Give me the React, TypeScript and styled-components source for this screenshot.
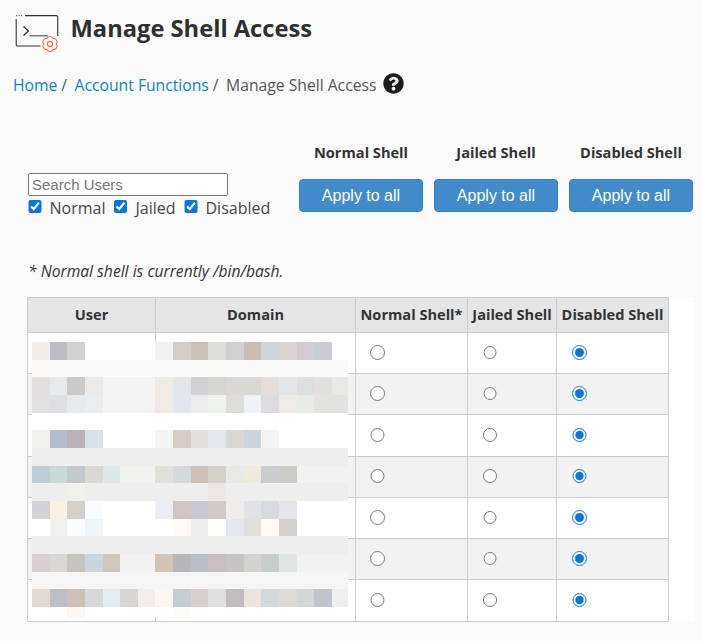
import React from "react";
import styled, { createGlobalStyle } from "styled-components";
import { FaQuestionCircle } from "react-icons/fa";

const Global = createGlobalStyle`
  html, body { margin: 0; padding: 0; background: #fafafa; }
  body { font-family: "Open Sans", "Liberation Sans", sans-serif; color: #333; }
`;

const Page = styled.div`
  width: 703px;
  height: 641px;
  overflow: hidden;
  box-sizing: border-box;
  background: #fafafa;
`;

const Header = styled.header`
  display: flex;
  align-items: center;
  height: 56px;
  padding: 0 0 0 14px;
`;

const LogoSvg = styled.svg`
  width: 46px;
  height: 40px;
  flex: none;
  margin-top: 7px;
`;

const Title = styled.h1`
  margin: 0 0 0 10.5px;
  font-size: 23.7px;
  font-weight: 700;
  line-height: 30px;
  color: #2f2f2f;
`;

const Crumbs = styled.nav`
  display: flex;
  align-items: center;
  height: 30px;
  margin-top: 14px;
  padding-left: 13px;
  font-size: 15.7px;
  color: #555;
`;

const CrumbLink = styled.a`
  color: #0d7fd0;
  text-decoration: none;
`;

const Slash = styled.span`
  margin: 0 7.5px 0 4px;
  color: #555;
`;

const HelpIcon = styled(FaQuestionCircle)`
  width: 21px;
  height: 21px;
  margin: -3px 0 0 6.5px;
  color: #1c1c1c;
`;

const Toolbar = styled.section`
  display: flex;
  align-items: flex-end;
  justify-content: space-between;
  height: 77px;
  margin-top: 35px;
  padding: 0 10px 0 28px;
`;

const Filters = styled.div`
  display: flex;
  flex-direction: column;
  margin-bottom: -8px;
`;

const Search = styled.input`
  box-sizing: border-box;
  width: 200px;
  height: 23px;
  padding: 0 3px;
  border: 1px solid #767676;
  border-radius: 2px;
  background: #fff;
  font-family: "Liberation Sans", Arial, sans-serif;
  font-size: 15px;
  &::placeholder { color: #757575; }
`;

const Checks = styled.div`
  display: flex;
  align-items: center;
  height: 24px;
`;

const CheckLabel = styled.label`
  display: flex;
  align-items: center;
  margin-right: 8.5px;
  font-size: 16px;
  color: #444;
  &:last-child { margin-right: 0; }
`;

const Check = styled.input`
  width: 13.5px;
  height: 13.5px;
  margin: -3px 8px 0 0;
  accent-color: #0b76d8;
`;

const Bulk = styled.div`
  display: flex;
  gap: 11px;
`;

const BulkCol = styled.div`
  display: flex;
  flex-direction: column;
  align-items: center;
  width: 124px;
`;

const BulkTitle = styled.div`
  height: 22px;
  margin-bottom: 16px;
  font-size: 14.6px;
  line-height: 22px;
  font-weight: 700;
  color: #333;
`;

const ApplyButton = styled.button`
  box-sizing: border-box;
  width: 124px;
  height: 33px;
  padding: 0;
  border: 1px solid #3a80bf;
  border-radius: 4px;
  background: #428bca;
  color: #fff;
  font-family: "Liberation Sans", Arial, sans-serif;
  font-size: 16px;
`;

const Note = styled.p`
  margin: 47px 0 0 28px;
  height: 24px;
  font-size: 15.65px;
  line-height: 24px;
  font-style: italic;
  color: #333;
`;

const TableWrap = styled.div`
  position: relative;
  width: 667px;
  height: 324px;
  margin: 14px 0 0 27px;
  background: #fff;
`;

const Table = styled.table`
  width: 641px;
  table-layout: fixed;
  border-collapse: collapse;
  background: #fff;
`;

const Th = styled.th<{ $w: number }>`
  box-sizing: border-box;
  width: ${(p) => p.$w}px;
  height: 34.75px;
  padding: 0 0 2px;
  border: 1px solid #ccc;
  background: #e5e5e5;
  font-size: 14.6px;
  font-weight: 700;
  text-align: center;
  color: #333;
`;

const Tr = styled.tr<{ $alt: boolean }>`
  height: 41.25px;
  background: ${(p) => (p.$alt ? "#f2f2f2" : "#fff")};
`;

const Td = styled.td<{ $pad?: number }>`
  padding: 0 0 1px ${(p) => p.$pad ?? 15}px;
  border: 1px solid #ccc;
  line-height: 0;
`;

const Radio = styled.input<{ $s: number }>`
  width: ${(p) => p.$s}px;
  height: ${(p) => p.$s}px;
  margin: 0;
  accent-color: #0b76d8;
`;

const Mosaic = styled.div`
  position: absolute;
  left: 5px;
  top: 45px;
  width: 316px;
  height: 275px;
  display: grid;
  grid-template-columns: repeat(17, 17.65px) 16px;
  grid-template-rows: repeat(15, 17.67px) 10px;
`;

const Tile = styled.div<{ $c: string }>`
  background: ${(p) => p.$c};
`;

const W = "#ffffff";
const G = "#eeeeee";
const L = "#f2f2f2";
const M = "#f3f3f3";
const T = "transparent";

const tiles: string[][] = [
  ["#f0ede6", "#bdbbc5", "#d2d0d0", W, W, W, W, "#eef2f7", "#d3cbc6", "#c9c0b7", "#dcddd8", "#cfd0d3", "#cabcb1", "#cfd6d9", "#d9d5d1", "#d2ccd0", "#c9ccd5", W],
  ["#fbf9f5", ...Array(17).fill("#f9f9f9")],
  ["#e3dfe0", "#e7eaea", "#cacaca", "#eceae8", M, M, M, "#efeae4", "#e3e6e9", "#d1d0d5", "#d6d5d0", "#d9d8d4", "#d9d8d5", "#e3deda", "#e3e6e8", "#dddee0", "#e2dfdc", "#e7e9e6"],
  ["#e3e0e1", "#dedfe3", "#e7eaed", "#e9edf0", M, M, M, "#efeae5", "#e1e6ee", "#eaebea", "#eff1ec", "#dddcd8", "#eef2f5", "#dcdce0", "#eeebe6", "#e8eae8", "#e2e3e1", "#e2e3e1"],
  Array(18).fill(W),
  ["#f0f0ee", "#b2bfcb", "#b9b3b7", "#dbe1e8", W, W, W, "#f3f5f3", "#d9ccc2", "#e2e0dd", "#e2e7ea", "#d9d7d3", "#cdd4db", "#f6f4f2", W, W, W, W],
  Array(18).fill(G),
  ["#c0ccd6", "#cbd8d8", "#c3c8cc", "#dbd7d3", "#dce8e8", "#f1f3ee", L, "#dfe0da", "#d4d9dc", "#cfc3b9", "#d4cfc8", "#e8e8e6", "#efe8dc", "#cbcccd", "#cbcbc8", L, L, L],
  [G, G, "#f0f1eb", G, G, G, G, G, G, G, "#ebe8e2", G, G, G, G, G, G, G],
  ["#d2d3d7", "#fbf1e0", "#d3d0cb", "#f8fcff", W, W, W, "#e9eef6", "#cfc6c4", "#c7c6d3", "#d0cbc6", "#eeede9", "#dfe3e7", "#d7dbdf", "#e3e5ea", W, W, W],
  [W, "#eff1f0", "#fafcff", "#f0f5fa", W, W, W, W, "#fffaf6", "#edecea", "#fefff9", "#e3e8f0", "#e3ded9", "#fff9f2", "#d6d0d1", W, W, W],
  Array(18).fill(G),
  ["#d9ced3", "#d8d7d3", "#c7c4bf", "#cbd5dd", "#d0c6bc", L, L, "#d2c3b7", "#b6b6bb", "#b8bdc6", "#c9bfc0", "#c6c5c3", "#d3d2cf", "#c6cdca", "#dfe4e7", L, L, L],
  Array(18).fill("#f5f5f5"),
  ["#e1d8d0", "#bcbfc9", "#cdc0b4", "#d6d8d7", "#e3ecf3", "#d9d5d4", "#f1eeec", "#fbf6ef", "#c5cdd0", "#d8cfce", "#dfe1e0", "#c1bdbe", "#ebe4da", "#d2d9dc", "#ddd9d4", "#d5d6d8", "#c1c4cd", "#efefef"],
  [W, W, "#fdf6f0", W, W, W, W, W, "#fdfcf6", W, W, W, W, W, W, W, W, T],
];

const shells = ["Normal Shell", "Jailed Shell", "Disabled Shell"];

const ShellLogo = () => (
  <LogoSvg viewBox="14 12 46 40" fill="none">
    <path d="M25 15.6H56.5a1.2 1.2 0 0 1 1.2 1.2V36" stroke="#333" strokeWidth="1.1" />
    <path d="M16 15.6h1.2M18.6 15.6h1.2M21 15.6h1.2" stroke="#777" strokeWidth="1.1" />
    <path d="M16.2 19V44.8a1.2 1.2 0 0 0 1.2 1.2H40.5" stroke="#333" strokeWidth="1.1" />
    <path d="M23.5 26.5L28.5 31L23.5 35.5" stroke="#222" strokeWidth="1.2" />
    <path d="M29.5 35.8H48" stroke="#555" strokeWidth="1.2" />
    <path
      d="M56.2 44A3.3 3.3 0 0 1 53.1 49.4A3.3 3.3 0 0 1 46.9 49.4A3.3 3.3 0 0 1 43.8 44A3.3 3.3 0 0 1 46.9 38.6A3.3 3.3 0 0 1 53.1 38.6A3.3 3.3 0 0 1 56.2 44Z"
      stroke="#f26d3d"
      strokeWidth="1.1"
    />
    <circle cx="50" cy="44" r="2.6" stroke="#f26d3d" strokeWidth="1.1" />
  </LogoSvg>
);

export default function App() {
  return (
    <Page>
      <Global />
      <Header>
        <ShellLogo />
        <Title>Manage Shell Access</Title>
      </Header>
      <Crumbs>
        <CrumbLink href="#">Home</CrumbLink>
        <Slash>/</Slash>
        <CrumbLink href="#">Account Functions</CrumbLink>
        <Slash>/</Slash>
        <span>Manage Shell Access</span>
        <HelpIcon />
      </Crumbs>
      <Toolbar>
        <Filters>
          <Search placeholder="Search Users" />
          <Checks>
            {["Normal", "Jailed", "Disabled"].map((name) => (
              <CheckLabel key={name}>
                <Check type="checkbox" defaultChecked />
                {name}
              </CheckLabel>
            ))}
          </Checks>
        </Filters>
        <Bulk>
          {shells.map((name) => (
            <BulkCol key={name}>
              <BulkTitle>{name}</BulkTitle>
              <ApplyButton type="button">Apply to all</ApplyButton>
            </BulkCol>
          ))}
        </Bulk>
      </Toolbar>
      <Note>* Normal shell is currently /bin/bash.</Note>
      <TableWrap>
        <Table>
          <thead>
            <tr>
              <Th $w={128}>User</Th>
              <Th $w={200}>Domain</Th>
              <Th $w={112}>Normal Shell*</Th>
              <Th $w={89}>Jailed Shell</Th>
              <Th $w={112}>Disabled Shell</Th>
            </tr>
          </thead>
          <tbody>
            {[0, 1, 2, 3, 4, 5, 6].map((row) => (
              <Tr key={row} $alt={row % 2 === 1}>
                <Td />
                <Td />
                <Td $pad={14}>
                  <Radio $s={14.5} type="radio" name={`shell-${row}`} />
                </Td>
                <Td>
                  <Radio $s={13.5} type="radio" name={`shell-${row}`} />
                </Td>
                <Td>
                  <Radio $s={14.5} type="radio" name={`shell-${row}`} defaultChecked />
                </Td>
              </Tr>
            ))}
          </tbody>
        </Table>
        <Mosaic>
          {tiles.flatMap((line, r) => line.map((c, i) => <Tile key={`${r}-${i}`} $c={c} />))}
        </Mosaic>
      </TableWrap>
    </Page>
  );
}
